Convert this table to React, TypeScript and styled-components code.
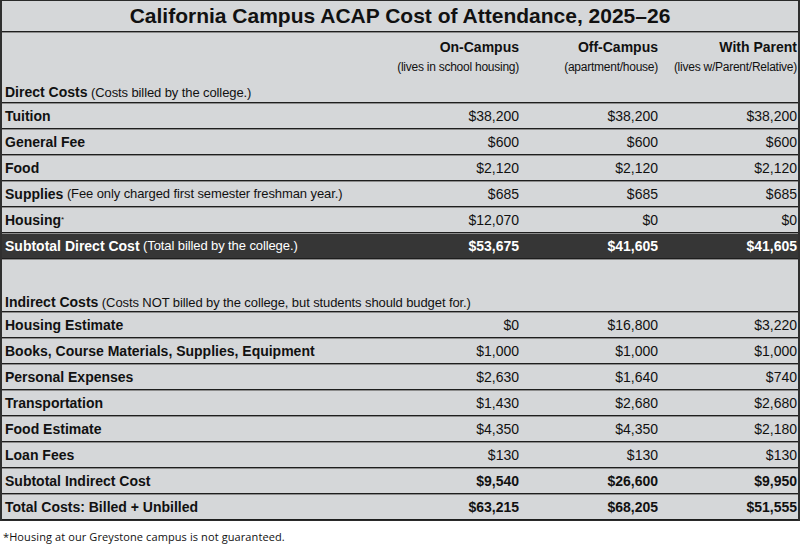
import React from "react";
import styled, { createGlobalStyle } from "styled-components";

const Global = createGlobalStyle`
  html, body { margin: 0; padding: 0; background: #ffffff; }
  body { font-family: "Liberation Sans", Arial, sans-serif; color: #111; }
`;

const Page = styled.div`
  width: 800px;
  display: flex;
  flex-direction: column;
`;

const Table = styled.div`
  background: #d5d7d9;
  border-top: 1px solid #2a2a2a;
  border-left: 2px solid #2f2f2f;
  border-right: 2px solid #2f2f2f;
  border-bottom: 1px solid #2a2a2a;
  display: flex;
  flex-direction: column;
`;

const Title = styled.div`
  height: 30px;
  display: flex;
  align-items: center;
  justify-content: center;
  font-weight: bold;
  font-size: 21px;
  color: #111;
  border-bottom: 1px solid #1e1e1e;
  box-shadow: 0 1px 0 #8c8c8c;
  position: relative;
  z-index: 1;
`;

const Grid = styled.div<{ $h: number; $dark?: boolean }>`
  display: grid;
  grid-template-columns: 1fr 139px 139px 139px;
  height: ${(p) => p.$h}px;
  box-sizing: border-box;
  border-bottom: 1px solid #1e1e1e;
  box-shadow: inset 0 1px 0 #8c8c8c;
  background: ${(p) => (p.$dark ? "#363636" : "transparent")};
  color: ${(p) => (p.$dark ? "#ffffff" : "#111")};
`;

const HeaderGrid = styled(Grid)`
  grid-template-rows: 24px 16px 1fr;
  padding-top: 3px;
  padding-bottom: 2px;
`;

const SectionGrid = styled(Grid)`
  align-items: end;
  padding-bottom: 1px;
`;

const Label = styled.div`
  display: flex;
  align-items: center;
  padding-left: 3px;
  font-size: 14px;
  white-space: nowrap;
`;

const SectionLabel = styled(Label)`
  grid-column: 1 / -1;
  align-self: end;
`;

const Bold = styled.b`
  font-weight: bold;
  font-size: 14px;
`;

const Note = styled.span`
  font-weight: normal;
  font-size: 13px;
  letter-spacing: -0.1px;
`;

const Sup = styled.sup`
  font-size: 8px;
  vertical-align: 5px;
  line-height: 0;
`;

const Value = styled.div<{ $bold?: boolean }>`
  display: flex;
  align-items: center;
  justify-content: flex-end;
  padding-right: 1px;
  font-size: 14px;
  font-weight: ${(p) => (p.$bold ? "bold" : "normal")};
`;

const ColHead = styled.div`
  display: flex;
  align-items: center;
  justify-content: flex-end;
  padding-right: 1px;
  font-weight: bold;
  font-size: 14px;
`;

const ColSub = styled.div`
  display: flex;
  align-items: center;
  justify-content: flex-end;
  padding-right: 1px;
  font-size: 12px;
  letter-spacing: -0.25px;
  white-space: nowrap;
`;

const Footnote = styled.div`
  padding: 8px 0 0 3px;
  font-family: "Open Sans", "Noto Sans", sans-serif;
  font-size: 11px;
  letter-spacing: 0.1px;
  color: #111;
`;

type RowData = {
  label: string;
  note?: string;
  sup?: boolean;
  values: string[];
  bold?: boolean;
  dark?: boolean;
};

const direct: RowData[] = [
  { label: "Tuition", values: ["$38,200", "$38,200", "$38,200"] },
  { label: "General Fee", values: ["$600", "$600", "$600"] },
  { label: "Food", values: ["$2,120", "$2,120", "$2,120"] },
  {
    label: "Supplies",
    note: "(Fee only charged first semester freshman year.)",
    values: ["$685", "$685", "$685"],
  },
  { label: "Housing", sup: true, values: ["$12,070", "$0", "$0"] },
  {
    label: "Subtotal Direct Cost",
    note: "(Total billed by the college.)",
    values: ["$53,675", "$41,605", "$41,605"],
    bold: true,
    dark: true,
  },
];

const indirect: RowData[] = [
  { label: "Housing Estimate", values: ["$0", "$16,800", "$3,220"] },
  {
    label: "Books, Course Materials, Supplies, Equipment",
    values: ["$1,000", "$1,000", "$1,000"],
  },
  { label: "Personal Expenses", values: ["$2,630", "$1,640", "$740"] },
  { label: "Transportation", values: ["$1,430", "$2,680", "$2,680"] },
  { label: "Food Estimate", values: ["$4,350", "$4,350", "$2,180"] },
  { label: "Loan Fees", values: ["$130", "$130", "$130"] },
  {
    label: "Subtotal Indirect Cost",
    values: ["$9,540", "$26,600", "$9,950"],
    bold: true,
  },
  {
    label: "Total Costs: Billed + Unbilled",
    values: ["$63,215", "$68,205", "$51,555"],
    bold: true,
  },
];

const Row = ({ r }: { r: RowData }) => (
  <Grid $h={26} $dark={r.dark}>
    <Label>
      <Bold>{r.label}</Bold>
      {r.sup && <Sup>*</Sup>}
      {r.note && <Note>&nbsp;{r.note}</Note>}
    </Label>
    {r.values.map((v, i) => (
      <Value key={i} $bold={r.bold}>
        {v}
      </Value>
    ))}
  </Grid>
);

export default function App() {
  return (
    <Page>
      <Global />
      <Table>
        <Title>California Campus ACAP Cost of Attendance, 2025–26</Title>
        <HeaderGrid $h={71}>
          <div />
          <ColHead>On-Campus</ColHead>
          <ColHead>Off-Campus</ColHead>
          <ColHead>With Parent</ColHead>
          <div />
          <ColSub>(lives in school housing)</ColSub>
          <ColSub>(apartment/house)</ColSub>
          <ColSub>(lives w/Parent/Relative)</ColSub>
          <SectionLabel>
            <Bold>Direct Costs</Bold>
            <Note>&nbsp;(Costs billed by the college.)</Note>
          </SectionLabel>
        </HeaderGrid>
        {direct.map((r) => (
          <Row key={r.label} r={r} />
        ))}
        <SectionGrid $h={53}>
          <SectionLabel>
            <Bold>Indirect Costs</Bold>
            <Note>
              &nbsp;(Costs NOT billed by the college, but students should budget for.)
            </Note>
          </SectionLabel>
        </SectionGrid>
        {indirect.map((r) => (
          <Row key={r.label} r={r} />
        ))}
      </Table>
      <Footnote>*Housing at our Greystone campus is not guaranteed.</Footnote>
    </Page>
  );
}
